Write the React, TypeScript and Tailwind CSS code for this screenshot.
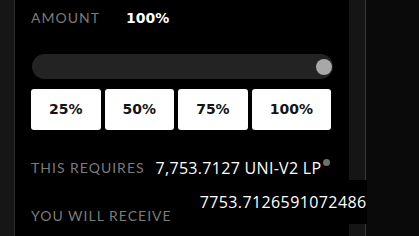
import React from "react";

const presets = ["25%", "50%", "75%", "100%"];

const label = "shrink-0 whitespace-nowrap text-[14px] leading-[20px] uppercase tracking-[1px] text-[#7b7b7b]";

export default function App() {
  return (
    <div className="flex h-[236px] w-[419px] overflow-hidden bg-black font-['Lato',sans-serif]">
      {/* left rail */}
      <div className="w-[15px] shrink-0 border-r border-[#2c2c2c] bg-[#161616]" />

      {/* panel */}
      <div className="flex w-[334px] shrink-0 flex-col pl-[16px] pr-[18px] pt-[8px]">
        <div className="flex h-[20px] items-center">
          <span className={label}>Amount</span>
          <span className="ml-[26px] font-['DejaVu_Sans',sans-serif] text-[14px] font-bold leading-[20px] text-white">100%</span>
        </div>

        {/* slider */}
        <div className="mt-[26px] ml-[1px] flex h-[25px] w-[301px] items-center justify-end rounded-full bg-[#232323] pr-[1px]">
          <div className="h-[16px] w-[16px] rounded-full bg-[#a8a8a8]" />
        </div>

        {/* presets */}
        <div className="mt-[10px] flex w-[300px] gap-[4px]">
          {presets.map((p) => (
            <button
              key={p}
              className="h-[41px] flex-auto rounded-[3px] bg-white font-['DejaVu_Sans',sans-serif] text-[14px] font-bold text-[#141414]"
            >
              {p}
            </button>
          ))}
        </div>

        <div className="mt-[28px] flex h-[20px] items-center">
          <span className={label}>This requires</span>
          <span className="ml-[11px] shrink-0 whitespace-nowrap font-['Open_Sans',sans-serif] text-[16px] leading-[20px] tracking-[0.3px] text-white">
            7,753.7127 UNI-V2 LP
          </span>
          <span className="mb-[12px] ml-[2px] h-[7px] w-[7px] shrink-0 rounded-full bg-[#6f6f6f]" />
        </div>

        <div className="mt-[2px] flex h-[44px] items-end">
          <span className={`${label} mb-[-2px]`}>You will receive</span>
          <span className="relative z-10 ml-[28px] flex h-[44px] shrink-0 items-center self-start whitespace-nowrap bg-black font-['Open_Sans',sans-serif] text-[16px] tracking-[0.4px] text-white">
            7753.7126591072486
          </span>
        </div>
      </div>

      {/* scroll column */}
      <div className="w-[17px] shrink-0 border-r border-[#3a3a3a] bg-[#151515]" />
      <div className="flex-1 bg-[#0a0a0a]" />
    </div>
  );
}
